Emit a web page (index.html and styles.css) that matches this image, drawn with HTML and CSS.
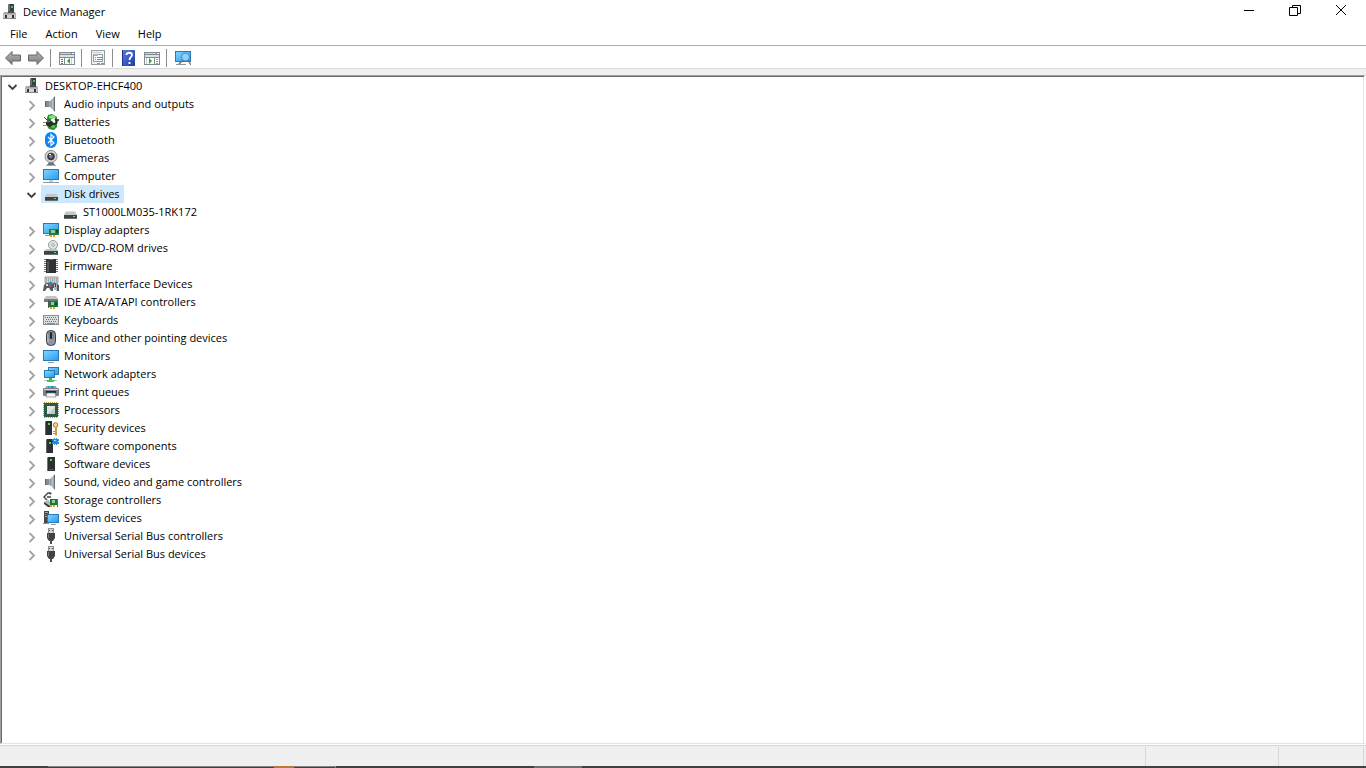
FILE: index.html
```
<!DOCTYPE html>
<html lang="en">
<head>
    <meta charset="UTF-8">
    <meta name="viewport" content="width=device-width, initial-scale=1.0">
    <title>Device Manager</title>
    <link rel="stylesheet" href="styles.css">
</head>
<body>
    <!-- Icon sprite -->
    <svg class="sprite" aria-hidden="true">
        <defs>
            <linearGradient id="screen" x1="0" y1="0" x2="1" y2="1">
                <stop offset="0" stop-color="#7fd4ff"/>
                <stop offset="1" stop-color="#2a9df0"/>
            </linearGradient>
            <linearGradient id="metal" x1="0" y1="0" x2="1" y2="0">
                <stop offset="0" stop-color="#8b9297"/>
                <stop offset=".5" stop-color="#b9bec2"/>
                <stop offset="1" stop-color="#7b8288"/>
            </linearGradient>
            <linearGradient id="arrow" x1="0" y1="0" x2="0" y2="1">
                <stop offset="0" stop-color="#b4b4b4"/>
                <stop offset="1" stop-color="#7c7c7c"/>
            </linearGradient>
            <linearGradient id="help" x1="0" y1="0" x2="1" y2="1">
                <stop offset="0" stop-color="#5b7fe0"/>
                <stop offset="1" stop-color="#1c3ca4"/>
            </linearGradient>
        </defs>
        <symbol id="i-root" viewBox="0 0 16 16">
            <path d="M6 1l1-1h5v9H6z" fill="#3c3f42"/><path d="M6 1h2v8H6z" fill="#6b6f73"/>
            <path d="M9 2h2v2H9z" fill="#35d24a"/>
            <path d="M2 8h11l1 2H1z" fill="#a4a7aa"/><path d="M6 7h6v2H6z" fill="#4b4f52"/>
            <path d="M1 10h13v5H1z" fill="#b4b7b9"/><path d="M1 15v-1h13v1z" fill="#85898c"/>
            <path d="M2 11h11v3H2z" fill="#d2d4d5"/>
            <path d="M3 11h2v3H3zM10 11h2v3h-2z" fill="#303234"/>
        </symbol>
        <symbol id="i-audio" viewBox="0 0 16 16">
            <path d="M2 5h5v6H2z" fill="#858d94"/><path d="M2 5h1v6H2z" fill="#5b6268"/><path d="M6 5h1v6H6z" fill="#a9afb3"/>
            <path d="M7 5l5-5v16l-5-5z" fill="url(#metal)"/><path d="M11 1h1v14h-1z" fill="#686f75"/>
        </symbol>
        <symbol id="i-battery" viewBox="0 0 16 16">
            <path d="M5 1l4-1 5 3v10l-3 3-5-1-2-3V4z" fill="#268a31"/>
            <path d="M6 2l4-1 3 2-3 2-4-1z" fill="#8adf83"/><path d="M8 5l4-1v5l-4-1z" fill="#e9f7e8"/>
            <path d="M7 12l4-1 1 2-2 1z" fill="#5fcd5a"/>
            <path d="M10 10c4 0 5-2 3-4h3" stroke="#222" stroke-width="1.4" fill="none"/>
            <path d="M3 8l4-2 3 2v3l-3 2-4-2z" fill="#2b2b2b"/><path d="M4 8l4-1" stroke="#777"/>
            <path d="M0 8h3v1H0zM0 11h3v1H0z" fill="#a98b35"/>
            <path d="M1 3l3 3" stroke="#444"/>
        </symbol>
        <symbol id="i-bluetooth" viewBox="0 0 16 16">
            <rect x="2" y="0" width="12" height="16" rx="6" fill="#0a84f5"/>
            <path d="M5 5l6 6-3 2.500V2.500L11 5l-6 6" fill="none" stroke="#fff" stroke-width="1.200"/>
        </symbol>
        <symbol id="i-camera" viewBox="0 0 16 16">
            <path d="M4 15l2-3h4l2 3z" fill="#707477"/><path d="M3 15h10v1H3z" fill="#aaa"/>
            <circle cx="8" cy="6.500" r="6" fill="#d7d9da" stroke="#85898c"/>
            <circle cx="8" cy="6.500" r="3.800" fill="#3a3d42"/><circle cx="8" cy="6.500" r="1.700" fill="#76808d"/>
            <path d="M6 4h2v1H6z" fill="#fff"/>
        </symbol>
        <symbol id="i-computer" viewBox="0 0 16 16">
            <path d="M0 1h16v11H0z" fill="#2779b8"/><path d="M1 2h14v9H1z" fill="url(#screen)"/>
            <path d="M6 12h4v2H6z" fill="#c5cbd0"/><path d="M0 14h16v1H0z" fill="#8d989f"/>
        </symbol>
        <symbol id="i-disk" viewBox="0 0 16 16">
            <path d="M4 7h9l2 4H2z" fill="#c4c6c7"/><path d="M4 7h9v1H4z" fill="#dedfe0"/>
            <path d="M2 11h13v4H2z" fill="#3e4245"/><path d="M2 14h13v1H2z" fill="#686d70"/>
            <path d="M11 12h2v1h-2z" fill="#45e765"/>
        </symbol>
        <symbol id="i-display" viewBox="0 0 16 16">
            <path d="M0 1h16v11H0z" fill="#2779b8"/><path d="M1 2h14v9H1z" fill="url(#screen)"/>
            <path d="M2 13h5v1H2z" fill="#8d989f"/>
            <path d="M6 7h10v6H6z" fill="#23803e"/><path d="M8 8h4v3H8z" fill="#93cba0"/><path d="M13 8h2v3h-2z" fill="#135326"/>
            <path d="M7 13h2v2H7zM10 13h2v2h-2z" fill="#f2a019"/>
        </symbol>
        <symbol id="i-dvd" viewBox="0 0 16 16">
            <circle cx="10" cy="5" r="4.500" fill="#dfe2e4" stroke="#979ca0"/>
            <circle cx="10" cy="5" r="1.300" fill="#fff" stroke="#888" stroke-width=".7"/>
            <path d="M3 9h11l1 2H1z" fill="#c0c3c5"/><path d="M1 11h14v4H1z" fill="#3e4245"/>
            <path d="M1 14h14v1H1z" fill="#686d70"/><path d="M11 12h2v1h-2z" fill="#45e765"/>
        </symbol>
        <symbol id="i-firmware" viewBox="0 0 16 16">
            <path d="M1 1h14v1H1zM1 3h14v1H1zM1 5h14v1H1zM1 7h14v1H1zM1 9h14v1H1zM1 11h14v1H1zM1 13h14v1H1z" fill="#707375"/>
            <path d="M3 1h3v1h4V1h3v14H3z" fill="#303335"/><path d="M4 3h2v11H4z" fill="#505456"/>
        </symbol>
        <symbol id="i-hid" viewBox="0 0 16 16">
            <path d="M2 1h13v6H2z" fill="#d2d5d7" stroke="#969b9f"/>
            <path d="M3 3h11M3 5h11" stroke="#777c80" stroke-dasharray="1 1"/>
            <path d="M1 9l2-2h3l2 2 2-2h3l3 2v6h-2l-2-3h-2v3H8l-2-3H4l-2 3H0z" fill="#505a63"/>
            <path d="M3 8h2v2H3z" fill="#d8e0e5"/><path d="M6 6h3v3H6z" fill="#2387d8"/><path d="M6 9h2v2H6z" fill="#e34b2c"/>
            <path d="M11 8h3v6h-3z" fill="#aeb8bf"/><path d="M12 8h1v3h-1z" fill="#3d474e"/>
        </symbol>
        <symbol id="i-ide" viewBox="0 0 16 16">
            <path d="M3 2h10l2 3H1z" fill="#c3c6c8"/><path d="M1 5h14v3H1z" fill="#777b7d"/>
            <path d="M6 7h9v6H6z" fill="#16793a"/><path d="M8 8h3v3H8z" fill="#8cd19f"/><path d="M12 9h2v2h-2z" fill="#0c4822"/>
            <path d="M5 6h1v8H5z" fill="#555"/><path d="M7 13h2v2H7zM10 13h2v2h-2z" fill="#f2a019"/>
        </symbol>
        <symbol id="i-keyboard" viewBox="0 0 16 16">
            <path d="M0 3h16v10H0z" fill="#8b9094"/><path d="M1 4h14v8H1z" fill="#dcdfe1"/>
            <path d="M2 5.500h12M2 9.500h12" stroke="#6e7377" stroke-dasharray="1 1"/>
            <path d="M3 7.500h11" stroke="#6e7377" stroke-dasharray="1 1"/>
            <path d="M2 11.500h1M4 11.500h8M13 11.500h1" stroke="#85898c"/>
        </symbol>
        <symbol id="i-mouse" viewBox="0 0 16 16">
            <rect x="3.500" y=".5" width="9" height="15" rx="4" fill="#8b96a2" stroke="#3b4148"/>
            <path d="M5 4v8" stroke="#c4ccd4"/><rect x="7" y="2" width="2" height="7" rx="1" fill="#20252b"/>
            <path d="M6 1v8M10 1v8" stroke="#59636d" stroke-width=".6"/>
        </symbol>
        <symbol id="i-monitor" viewBox="0 0 16 16">
            <path d="M0 2h16v11H0z" fill="#2779b8"/><path d="M1 3h14v9H1z" fill="url(#screen)"/>
            <path d="M5 14h6v1H5z" fill="#8d989f"/>
        </symbol>
        <symbol id="i-network" viewBox="0 0 16 16">
            <path d="M5 1h11v8H5z" fill="#2779b8"/><path d="M6 2h9v6H6z" fill="url(#screen)"/>
            <path d="M1 4h11v8H1z" fill="#2779b8"/><path d="M2 5h9v6H2z" fill="url(#screen)"/>
            <path d="M6 12h3v2H6z" fill="#39b54a"/><path d="M1 14h13v1H1z" fill="#a5c9a8"/><path d="M4 14h7v2H4z" fill="#48c059"/>
        </symbol>
        <symbol id="i-printer" viewBox="0 0 16 16">
            <path d="M3 2h10l1 3H2z" fill="#9fa8ae"/><path d="M5 2h6v2H5z" fill="#1894ef"/><path d="M6 2h2v2H6z" fill="#38c7aa"/>
            <rect x="0" y="4" width="16" height="8" rx="1" fill="#7c8388"/><path d="M1 5h14v1H1z" fill="#d5d9dc"/>
            <path d="M3 7h10v2H3z" fill="#262a2d"/><path d="M4 9h8l1 4H3z" fill="#f8fafb" stroke="#7b8388" stroke-width=".7"/>
        </symbol>
        <symbol id="i-processor" viewBox="0 0 16 16">
            <path d="M1 .5h14M1 15.500h14M.5 1v14M15.500 1v14" stroke="#b59b4a" stroke-dasharray="1 1"/>
            <path d="M1 1h14v14H1z" fill="#2b5b44"/><path d="M4 4h8v8H4z" fill="#e2e4e3"/><path d="M5 12l7-7v7z" fill="#c5c9c7"/>
        </symbol>
        <symbol id="i-security" viewBox="0 0 16 16">
            <path d="M2 2l1-1h6v14H2z" fill="#2d3032"/><path d="M2 2h1v13H2z" fill="#64686b"/><path d="M5 3h2v2H5z" fill="#40e250"/>
            <circle cx="12.500" cy="5" r="2.300" fill="#f3d28a" stroke="#b37c22"/><path d="M12 7h2v8l-1 1-1-1z" fill="#d79a34"/>
            <path d="M10 11h2v1h-2zM10 13h2v1h-2z" fill="#c1842a"/>
        </symbol>
        <symbol id="i-component" viewBox="0 0 16 16">
            <path d="M3 2l1-1h6v14H3z" fill="#2d3032"/><path d="M3 2h1v13H3z" fill="#64686b"/><path d="M6 4h2v2H6z" fill="#40e250"/>
            <path d="M9 1h2V0h1v1h1V0h1v1h2v2h-1v1h1v2h-2v1h-1V6h-1v1h-1V6H9V4h1V3H9z" fill="#3089cd"/><path d="M11 2h2v1h-2z" fill="#9fd2f6"/>
        </symbol>
        <symbol id="i-software" viewBox="0 0 16 16">
            <path d="M4 2l1-1h7v14H4z" fill="#2d3032"/><path d="M4 2h1v13H4z" fill="#74787b"/><path d="M7 3h2v2H7z" fill="#40e250"/>
            <path d="M6 13h5v1H6z" fill="#565a5d"/>
        </symbol>
        <symbol id="i-storage" viewBox="0 0 16 16">
            <path d="M7 1H5L1 5l3 3M4 5h4" fill="none" stroke="#44484a" stroke-width="1.400"/>
            <path d="M6 0l3 1-2 2z" fill="#444"/>
            <path d="M1 10l4-2 6 4-3 3H6z" fill="#b4b7b9"/><path d="M1 10l6 4v1H5l-4-3z" fill="#333"/>
            <path d="M7 7h8v6H7z" fill="#16793a"/><path d="M9 8h3v3H9z" fill="#8cd19f"/><path d="M14 7h1v8h-1z" fill="#6a6e70"/>
            <path d="M7 13h2v2H7zM10 13h2v2h-2z" fill="#f2a019"/>
        </symbol>
        <symbol id="i-system" viewBox="0 0 16 16">
            <path d="M1 1h5v12H1z" fill="#44494d"/><path d="M2 2h3v1H2zM2 6h3v1H2z" fill="#a2a7ab"/><path d="M2 4h1v1H2z" fill="#40e250"/>
            <path d="M0 13h6v1H0z" fill="#8c9194"/>
            <path d="M4 4h12v9H4z" fill="#2779b8"/><path d="M5 5h10v7H5z" fill="url(#screen)"/><path d="M8 14h5v1H8z" fill="#8d989f"/>
        </symbol>
        <symbol id="i-usb" viewBox="0 0 16 16">
            <path d="M5 0h6v5H5z" fill="#8f9395"/><path d="M6 1h4v4H6z" fill="#d0d2d3"/><path d="M6 2h1v1H6zM9 2h1v1H9z" fill="#555"/>
            <path d="M4 5h8v5l-2 3H6l-2-3z" fill="#404345"/><path d="M5 6h1v4H5z" fill="#777"/><path d="M7 12h2v4H7z" fill="#4c4f51"/>
        </symbol>
        <symbol id="i-back" viewBox="0 0 16 16">
            <path d="M.5 8L7 1.500V5h8.500v6H7v3.500z" fill="url(#arrow)" stroke="#666"/>
        </symbol>
        <symbol id="i-tree" viewBox="0 0 16 16">
            <path d="M0 2h16v13H0z" fill="#7f8c93"/><path d="M1 3h11v1H1z" fill="#c9d2d7"/><path d="M13 3h2v1h-2z" fill="#fff"/>
            <path d="M1 5h14v2H1z" fill="#dce1e3"/><path d="M1 8h4v6H1zM6 8h9v6H6z" fill="#fff"/>
            <path d="M2 9.500h2M2 11.500h2M2 13.500h2" stroke="#3d78a8"/><path d="M11 8v6l-3-3z" fill="#2ba82b"/><path d="M12 8h1v6h-1z" fill="#c8ced1"/>
        </symbol>
        <symbol id="i-properties" viewBox="0 0 16 16">
            <path d="M1 0h14v15H1z" fill="#929ca2"/><path d="M2 1h12v13H2z" fill="#f0f3f5"/>
            <path d="M3 2h8v1H3z" fill="#c4cdd2"/><path d="M3.500 4.500h9v7h-9z" fill="#fff" stroke="#8d989f"/>
            <path d="M4 4h4v2H4z" fill="#a9b4ba"/><path d="M5 7.500h1M7 7.500h5M5 9.500h1M7 9.500h5" stroke="#7f8b92"/>
            <path d="M7 13h3v1H7zM11 13h3v1h-3z" fill="#25bdf0"/>
        </symbol>
        <symbol id="i-help" viewBox="0 0 16 16">
            <path d="M1 0h13v16H1z" fill="url(#help)"/><path d="M1 0h1v16H1z" fill="#183182"/>
            <path d="M5.500 5c0-3 5.500-3 5.500 0 0 2-2.500 2-2.500 5" fill="none" stroke="#fff" stroke-width="1.800"/>
            <path d="M7.500 12h2v2h-2z" fill="#fff"/>
        </symbol>
        <symbol id="i-scan" viewBox="0 0 16 16">
            <path d="M0 2h16v13H0z" fill="#7f8c93"/><path d="M1 3h11v1H1z" fill="#c9d2d7"/><path d="M13 3h2v1h-2z" fill="#fff"/>
            <path d="M1 5h14v2H1z" fill="#dce1e3"/><path d="M1 8h9v6H1zM11 8h4v6h-4z" fill="#fff"/>
            <path d="M12 9.500h2M12 11.500h2M12 13.500h2" stroke="#8b989e"/><path d="M5 8v6l3-3z" fill="#2ba82b"/><path d="M2 8h1v6H2z" fill="#c8ced1"/>
        </symbol>
        <symbol id="i-find" viewBox="0 0 16 16">
            <path d="M0 1h16v11H0z" fill="#2779b8"/><path d="M1 2h14v9H1z" fill="url(#screen)"/>
            <path d="M1 14h10v1H1z" fill="#8d989f"/><path d="M8 10l-4 4" stroke="#5f7886" stroke-width="1.600"/>
            <circle cx="10.500" cy="7" r="4" fill="#8bd3fb" stroke="#4e8db5"/><path d="M13 10l3 5" stroke="#5f7886" stroke-width="1.400"/>
        </symbol>
        <symbol id="i-right" viewBox="0 0 15 18">
            <path d="M5.500 6l4.500 4.500-4.500 4.500" fill="none" stroke="#a3a3a3" stroke-width="1.800"/>
        </symbol>
        <symbol id="i-down" viewBox="0 0 15 18">
            <path d="M3.500 8l4 4 4-4" fill="none" stroke="#404040" stroke-width="1.800"/>
        </symbol>
    </svg>

    <header class="title-bar">
        <svg class="icon"><use href="#i-root"/></svg>
        <h1 class="title">Device Manager</h1>
        <div class="window-controls">
            <button type="button" aria-label="Minimize"><svg class="glyph" viewBox="0 0 12 12"><path d="M1 6.500h10"/></svg></button>
            <button type="button" aria-label="Restore"><svg class="glyph" viewBox="0 0 12 12"><path d="M.5 3.500h8v8h-8zM3.500 3V1.500h8v8H9"/></svg></button>
            <button type="button" aria-label="Close"><svg class="glyph" viewBox="0 0 12 12"><path d="M1 1l10 10M11 1L1 11"/></svg></button>
        </div>
    </header>

    <nav class="menu-bar">
        <button type="button">File</button>
        <button type="button">Action</button>
        <button type="button">View</button>
        <button type="button">Help</button>
    </nav>

    <div class="toolbar">
        <button type="button" aria-label="Back"><svg class="icon"><use href="#i-back"/></svg></button>
        <button type="button" aria-label="Forward"><svg class="icon flip"><use href="#i-back"/></svg></button>
        <span class="separator"></span>
        <button type="button" aria-label="Show/Hide Console Tree"><svg class="icon"><use href="#i-tree"/></svg></button>
        <span class="separator"></span>
        <button type="button" aria-label="Properties"><svg class="icon"><use href="#i-properties"/></svg></button>
        <span class="separator"></span>
        <button type="button" aria-label="Help"><svg class="icon"><use href="#i-help"/></svg></button>
        <button type="button" aria-label="Show/Hide Action Pane"><svg class="icon"><use href="#i-scan"/></svg></button>
        <span class="separator"></span>
        <button type="button" aria-label="Scan for hardware changes"><svg class="icon"><use href="#i-find"/></svg></button>
    </div>

    <main class="tree-pane">
        <ul class="tree">
            <li>
                <div class="row"><button type="button" class="expander" aria-label="Collapse"><svg><use href="#i-down"/></svg></button><span class="item"><svg class="icon"><use href="#i-root"/></svg>DESKTOP-EHCF400</span></div>
                <ul>
                    <li class="row"><button type="button" class="expander" aria-label="Expand"><svg><use href="#i-right"/></svg></button><span class="item"><svg class="icon"><use href="#i-audio"/></svg>Audio inputs and outputs</span></li>
                    <li class="row"><button type="button" class="expander" aria-label="Expand"><svg><use href="#i-right"/></svg></button><span class="item"><svg class="icon"><use href="#i-battery"/></svg>Batteries</span></li>
                    <li class="row"><button type="button" class="expander" aria-label="Expand"><svg><use href="#i-right"/></svg></button><span class="item"><svg class="icon"><use href="#i-bluetooth"/></svg>Bluetooth</span></li>
                    <li class="row"><button type="button" class="expander" aria-label="Expand"><svg><use href="#i-right"/></svg></button><span class="item"><svg class="icon"><use href="#i-camera"/></svg>Cameras</span></li>
                    <li class="row"><button type="button" class="expander" aria-label="Expand"><svg><use href="#i-right"/></svg></button><span class="item"><svg class="icon"><use href="#i-computer"/></svg>Computer</span></li>
                    <li>
                        <div class="row"><button type="button" class="expander" aria-label="Collapse"><svg><use href="#i-down"/></svg></button><span class="item selected"><svg class="icon"><use href="#i-disk"/></svg>Disk drives</span></div>
                        <ul>
                            <li class="row leaf"><span class="item"><svg class="icon"><use href="#i-disk"/></svg>ST1000LM035-1RK172</span></li>
                        </ul>
                    </li>
                    <li class="row"><button type="button" class="expander" aria-label="Expand"><svg><use href="#i-right"/></svg></button><span class="item"><svg class="icon"><use href="#i-display"/></svg>Display adapters</span></li>
                    <li class="row"><button type="button" class="expander" aria-label="Expand"><svg><use href="#i-right"/></svg></button><span class="item"><svg class="icon"><use href="#i-dvd"/></svg>DVD/CD-ROM drives</span></li>
                    <li class="row"><button type="button" class="expander" aria-label="Expand"><svg><use href="#i-right"/></svg></button><span class="item"><svg class="icon"><use href="#i-firmware"/></svg>Firmware</span></li>
                    <li class="row"><button type="button" class="expander" aria-label="Expand"><svg><use href="#i-right"/></svg></button><span class="item"><svg class="icon"><use href="#i-hid"/></svg>Human Interface Devices</span></li>
                    <li class="row"><button type="button" class="expander" aria-label="Expand"><svg><use href="#i-right"/></svg></button><span class="item"><svg class="icon"><use href="#i-ide"/></svg>IDE ATA/ATAPI controllers</span></li>
                    <li class="row"><button type="button" class="expander" aria-label="Expand"><svg><use href="#i-right"/></svg></button><span class="item"><svg class="icon"><use href="#i-keyboard"/></svg>Keyboards</span></li>
                    <li class="row"><button type="button" class="expander" aria-label="Expand"><svg><use href="#i-right"/></svg></button><span class="item"><svg class="icon"><use href="#i-mouse"/></svg>Mice and other pointing devices</span></li>
                    <li class="row"><button type="button" class="expander" aria-label="Expand"><svg><use href="#i-right"/></svg></button><span class="item"><svg class="icon"><use href="#i-monitor"/></svg>Monitors</span></li>
                    <li class="row"><button type="button" class="expander" aria-label="Expand"><svg><use href="#i-right"/></svg></button><span class="item"><svg class="icon"><use href="#i-network"/></svg>Network adapters</span></li>
                    <li class="row"><button type="button" class="expander" aria-label="Expand"><svg><use href="#i-right"/></svg></button><span class="item"><svg class="icon"><use href="#i-printer"/></svg>Print queues</span></li>
                    <li class="row"><button type="button" class="expander" aria-label="Expand"><svg><use href="#i-right"/></svg></button><span class="item"><svg class="icon"><use href="#i-processor"/></svg>Processors</span></li>
                    <li class="row"><button type="button" class="expander" aria-label="Expand"><svg><use href="#i-right"/></svg></button><span class="item"><svg class="icon"><use href="#i-security"/></svg>Security devices</span></li>
                    <li class="row"><button type="button" class="expander" aria-label="Expand"><svg><use href="#i-right"/></svg></button><span class="item"><svg class="icon"><use href="#i-component"/></svg>Software components</span></li>
                    <li class="row"><button type="button" class="expander" aria-label="Expand"><svg><use href="#i-right"/></svg></button><span class="item"><svg class="icon"><use href="#i-software"/></svg>Software devices</span></li>
                    <li class="row"><button type="button" class="expander" aria-label="Expand"><svg><use href="#i-right"/></svg></button><span class="item"><svg class="icon"><use href="#i-audio"/></svg>Sound, video and game controllers</span></li>
                    <li class="row"><button type="button" class="expander" aria-label="Expand"><svg><use href="#i-right"/></svg></button><span class="item"><svg class="icon"><use href="#i-storage"/></svg>Storage controllers</span></li>
                    <li class="row"><button type="button" class="expander" aria-label="Expand"><svg><use href="#i-right"/></svg></button><span class="item"><svg class="icon"><use href="#i-system"/></svg>System devices</span></li>
                    <li class="row"><button type="button" class="expander" aria-label="Expand"><svg><use href="#i-right"/></svg></button><span class="item"><svg class="icon"><use href="#i-usb"/></svg>Universal Serial Bus controllers</span></li>
                    <li class="row"><button type="button" class="expander" aria-label="Expand"><svg><use href="#i-right"/></svg></button><span class="item"><svg class="icon"><use href="#i-usb"/></svg>Universal Serial Bus devices</span></li>
                </ul>
            </li>
        </ul>
    </main>

    <footer class="status-bar">
        <span class="status-main"></span>
        <span class="status-wide"></span>
        <span class="status-narrow"></span>
    </footer>

    <!-- Top edge of the taskbar -->
    <div class="taskbar">
        <span class="search-box"><span class="highlight"></span></span>
        <span class="active-app"></span>
    </div>
</body>
</html>
```
FILE: styles.css
```
* {
    box-sizing: border-box;
}
body {
    margin: 0;
    height: 100vh;
    display: flex;
    flex-direction: column;
    background-color: #fff;
    color: #000;
    font-family: "Open Sans", "Noto Sans", sans-serif;
    font-size: 11px;
    line-height: 18px;
}
button {
    margin: 0;
    padding: 0;
    border: 0;
    background: none;
    color: inherit;
    font: inherit;
}
ul {
    margin: 0;
    padding: 0;
    list-style: none;
}
.sprite {
    position: absolute;
    width: 0;
    height: 0;
}
.icon {
    display: block;
    flex: none;
    width: 16px;
    height: 16px;
}
.flip {
    transform: scaleX(-1);
}

/* Title bar and menu */
.title-bar {
    display: flex;
    align-items: center;
    gap: 5px;
    height: 24px;
    padding-left: 2px;
}
.title {
    margin: 0;
    font-size: 11px;
    font-weight: normal;
}
.window-controls {
    display: flex;
    align-self: flex-start;
    margin-left: auto;
    padding-right: 2px;
}
.window-controls button {
    display: flex;
    align-items: center;
    justify-content: center;
    width: 46px;
    height: 20px;
}
.glyph {
    width: 12px;
    height: 12px;
    fill: none;
    stroke: #000;
}
.menu-bar {
    display: flex;
    gap: 2px;
    height: 22px;
    padding: 0 0 2px 2px;
    border-bottom: 1px solid #acacb0;
}
.menu-bar button {
    padding: 0 8px;
}

/* Toolbar */
.toolbar {
    display: flex;
    align-items: center;
    height: 23px;
    padding: 2px 1px 0;
    border-bottom: 1px solid #d9d9d9;
}
.toolbar button {
    display: flex;
    justify-content: center;
    width: 23px;
}
.separator {
    width: 1px;
    height: 18px;
    margin: 0 4px 0 3px;
    background-color: #8d8d8d;
}

/* Device tree */
.tree-pane {
    flex: 1;
    min-height: 0;
    overflow: hidden;
    margin-top: 6px;
    padding: 1px;
    border-style: solid;
    border-width: 1px 2px 1px 1px;
    border-color: #a0a0a0 #fff #e3e3e3 #a0a0a0;
    box-shadow: inset 1px 1px #696969, inset -1px 0 #e3e3e3, 0 -6px #f0f0f0;
}
.tree ul {
    margin-left: 19px;
}
.row {
    display: flex;
    height: 18px;
    padding-left: 3px;
}
.leaf {
    padding-left: 20px;
}
.expander {
    width: 15px;
    height: 18px;
    margin-right: 2px;
}
.expander svg {
    display: block;
    width: 15px;
    height: 18px;
}
.item {
    display: flex;
    align-items: center;
    gap: 5px;
    padding: 0 4px 0 2px;
    white-space: nowrap;
}
.selected {
    background-color: #cce8ff;
}

/* Status bar */
.status-bar {
    display: flex;
    height: 21px;
    margin-top: 1px;
    padding: 1px 2px 0 0;
    border-top: 1px solid #d7d7d7;
    background-color: #f0f0f0;
}
.status-bar span {
    border-right: 1px solid #d7d7d7;
}
.status-main {
    flex: 1;
}
.status-wide {
    width: 133px;
}
.status-narrow {
    width: 85px;
}

.taskbar {
    display: flex;
    height: 2px;
    background-color: #424041;
}
.search-box {
    width: 288px;
    margin-left: 48px;
    border-top: 1px solid #858384;
    border-right: 1px solid #858384;
}
.highlight {
    display: block;
    width: 20px;
    height: 2px;
    margin: -1px 0 0 226px;
    background-color: #b9783f;
}
.active-app {
    width: 48px;
    margin-left: 198px;
    background-color: #6f6c6d;
}
```
